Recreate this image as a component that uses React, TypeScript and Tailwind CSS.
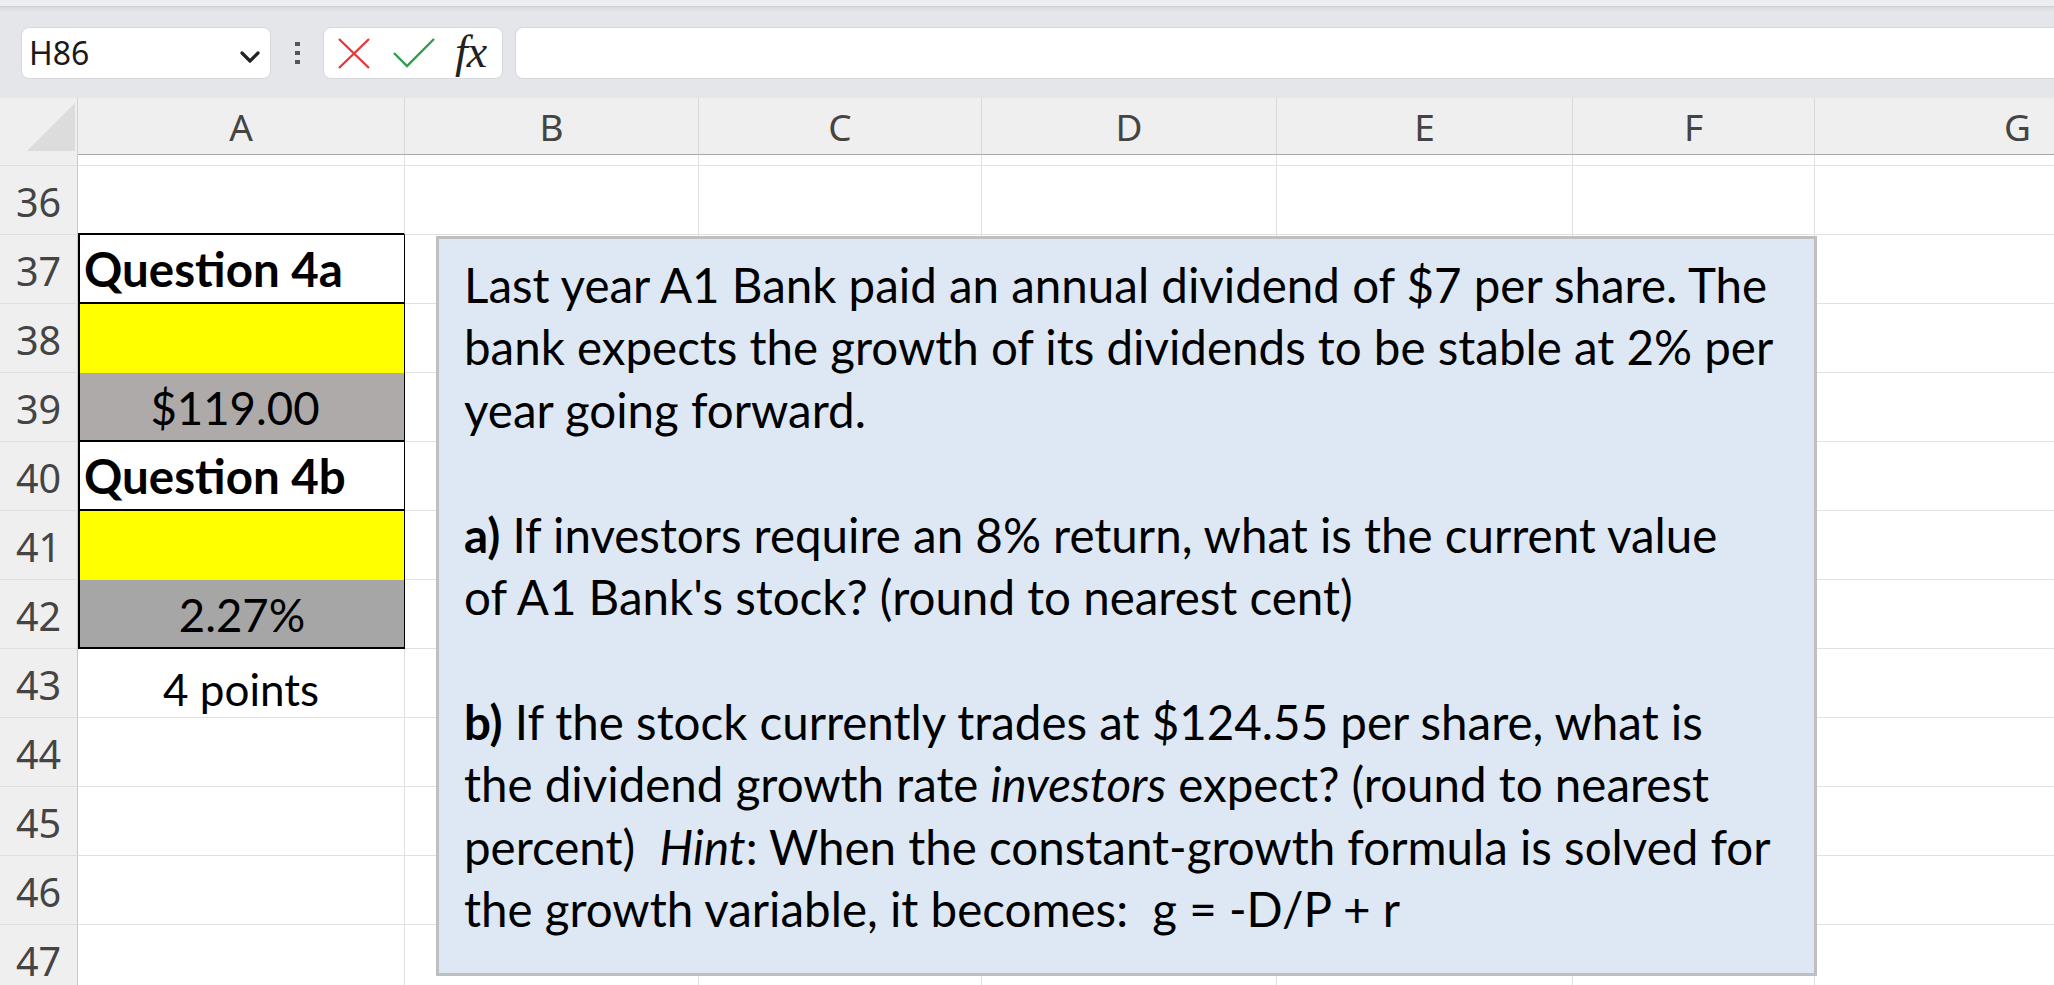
import React from "react";

const cols = [
  { key: "A", w: "w-[327px]" },
  { key: "B", w: "w-[294px]" },
  { key: "C", w: "w-[283px]" },
  { key: "D", w: "w-[295px]" },
  { key: "E", w: "w-[296px]" },
  { key: "F", w: "w-[242px]" },
  { key: "G", w: "w-[406px]" },
];

const rowNums = [36, 37, 38, 39, 40, 41, 42, 43, 44, 45, 46, 47];

// styling + content for column A in the question block
const aCells: Record<number, { cls: string; text?: React.ReactNode }> = {
  36: { cls: "border-b-2 border-b-black pb-[10px]" },
  37: {
    cls: "bg-white border-x-2 border-x-black border-b-2 border-b-black justify-start pl-[4px] pb-[10px] font-bold text-[47.5px]",
    text: "Question 4a",
  },
  38: { cls: "bg-[#ffff00] border-x-2 border-x-black border-b-0" },
  39: {
    cls: "bg-[#aeaaaa] border-x-2 border-x-black border-b-2 border-b-black justify-center pr-[14px] pb-[10px] text-[45.5px]",
    text: "$119.00",
  },
  40: {
    cls: "bg-white border-x-2 border-x-black border-b-2 border-b-black justify-start pl-[4px] pb-[10px] font-bold text-[47.5px]",
    text: "Question 4b",
  },
  41: { cls: "bg-[#ffff00] border-x-2 border-x-black border-b-0" },
  42: {
    cls: "bg-[#a6a6a6] border-x-2 border-x-black border-b-2 border-b-black justify-center pb-[10px] text-[45.5px]",
    text: "2.27%",
  },
  43: { cls: "justify-center pb-[6px] text-[38.5px]", text: "4 points" },
};

function FormulaBar() {
  return (
    <div className="h-[98px] bg-[#e4e6ea] flex flex-col">
      <div className="h-[7px] bg-[#eceef1] border-b border-[#cdd0d4]" />
      <div className="h-[5px] bg-gradient-to-b from-[#d8dade] to-[#e4e6ea]" />
      <div className="flex items-center mt-[15px] pl-[21px] h-[52px]">
        <div className="w-[250px] h-full bg-white rounded-[8px] border border-[#d6d8db] flex items-center pl-[7px] relative font-['Noto_Sans'] text-[32px] text-[#1a1a1a]">
          H86
          <svg className="absolute left-[217px] top-[22px]" width="22" height="14" viewBox="0 0 22 14">
            <path d="M3 3 L11 11 L19 3" fill="none" stroke="#222" strokeWidth="3.2" strokeLinecap="round" strokeLinejoin="round" />
          </svg>
        </div>
        <div className="w-[52px] flex flex-col items-center gap-[5px]">
          <div className="w-[5px] h-[4px] bg-[#555]" />
          <div className="w-[5px] h-[4px] bg-[#555]" />
          <div className="w-[5px] h-[4px] bg-[#555]" />
        </div>
        <div className="w-[180px] h-full bg-white rounded-[8px] border border-[#d6d8db] flex items-center relative">
          <svg className="absolute left-[14px] top-[10px]" width="32" height="31" viewBox="0 0 32 31">
            <path d="M1 1 L31 30 M31 1 L1 30" stroke="#e5383b" strokeWidth="2.4" />
          </svg>
          <svg className="absolute left-[69px] top-[10px]" width="42" height="30" viewBox="0 0 42 30">
            <path d="M1 15 L14 28 L41 1" fill="none" stroke="#2f9e48" strokeWidth="2.4" />
          </svg>
          <span className="absolute left-[131px] top-[-5px] font-['Liberation_Serif'] italic text-[46px] leading-[58px] text-[#222] tracking-[-1px]">
            fx
          </span>
        </div>
        <div className="ml-[12px] flex-1 h-full bg-white rounded-l-[8px] border border-r-0 border-[#d6d8db]" />
      </div>
    </div>
  );
}

function HeaderRow() {
  return (
    <div className="flex h-[57px] bg-[#efefef] font-['Noto_Sans'] text-[37px] text-[#444]">
      <div className="w-[78px] shrink-0 relative border-r border-[#d0d0d0]">
        <svg className="absolute left-[27px] top-[5px]" width="48" height="48" viewBox="0 0 48 48">
          <path d="M48 0 L48 48 L0 48 Z" fill="#dcdcdc" />
        </svg>
      </div>
      {cols.map((c) => (
        <div
          key={c.key}
          className={`${c.w} shrink-0 border-r border-[#d8d8d8] border-b border-b-[#a8a8a8] flex items-center justify-center leading-none`}
        >
          {c.key}
        </div>
      ))}
    </div>
  );
}

function SliverRow() {
  return (
    <div className="flex h-[11px]">
      <div className="w-[78px] shrink-0 bg-[#efefef] border-r border-[#c8c8c8] border-b border-b-[#e0e0e0]" />
      {cols.map((c) => (
        <div key={c.key} className={`${c.w} shrink-0 border-r border-b border-[#e1e1e1]`} />
      ))}
    </div>
  );
}

function Row({ n }: { n: number }) {
  const a = aCells[n];
  return (
    <div className="flex h-[69px]">
      <div className="w-[78px] shrink-0 bg-[#efefef] border-r border-[#c8c8c8] border-b border-b-[#e0e0e0] flex items-center justify-center pt-[6px] font-['Noto_Sans'] text-[39.5px] text-[#444] leading-none">
        {n}
      </div>
      {cols.map((c) =>
        c.key === "A" ? (
          <div
            key={c.key}
            className={`${c.w} shrink-0 border-r border-b border-[#e1e1e1] flex items-end font-['Lato'] text-[44px] text-black leading-none ${a ? a.cls : ""}`}
          >
            {a?.text}
          </div>
        ) : (
          <div key={c.key} className={`${c.w} shrink-0 border-r border-b border-[#e1e1e1]`} />
        )
      )}
    </div>
  );
}

const lines: React.ReactNode[] = [
  "Last year A1 Bank paid an annual dividend of $7 per share. The",
  "bank expects the growth of its dividends to be stable at 2% per",
  "year going forward.",
  "",
  <>
    <b>a)</b> If investors require an 8% return, what is the current value
  </>,
  "of A1 Bank's stock? (round to nearest cent)",
  "",
  <>
    <b>b)</b> If the stock currently trades at $124.55 per share, what is
  </>,
  <>
    the dividend growth rate <i>investors</i> expect? (round to nearest
  </>,
  <>
    {"percent)  "}
    <i>Hint</i>: When the constant-growth formula is solved for
  </>,
  "the growth variable, it becomes:  g = -D/P + r",
];

export default function App() {
  return (
    <div className="w-[2054px] h-[985px] overflow-hidden bg-white relative">
      <FormulaBar />
      <div className="overflow-hidden">
        <HeaderRow />
        <SliverRow />
        {rowNums.map((n) => (
          <Row key={n} n={n} />
        ))}
      </div>

      {/* text box floating over the sheet */}
      <div className="absolute left-[436px] top-[236px] w-[1381px] h-[740px] border-[3px] border-[#bfbfbf] bg-[#dde8f4] pl-[25px] pt-[15px] font-['Lato'] text-[47.5px] leading-[62.4px] text-black">
        {lines.map((l, i) => (
          <div key={i} className="whitespace-pre h-[62.4px]">
            {l === "" ? " " : l}
          </div>
        ))}
      </div>
    </div>
  );
}
